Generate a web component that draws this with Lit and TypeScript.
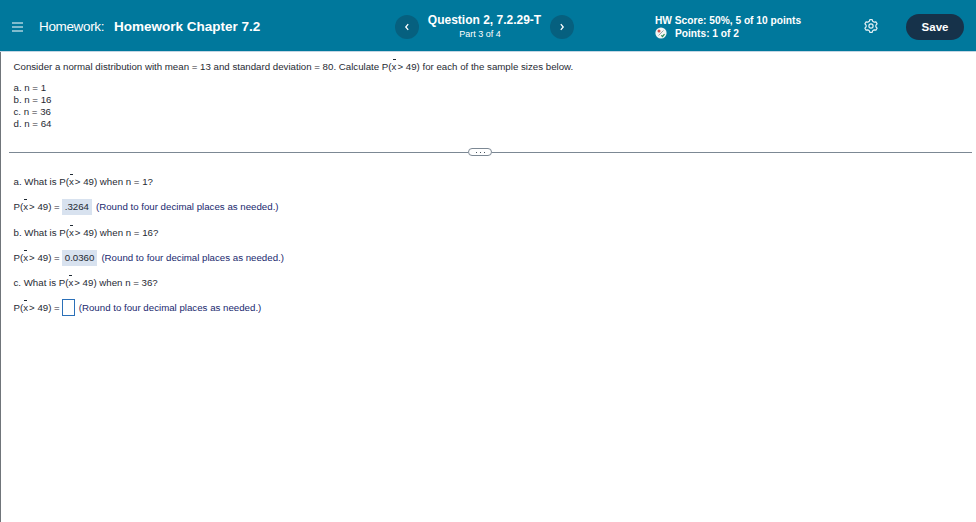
import { LitElement, html, css } from "lit";
import { customElement } from "lit/decorators.js";

const xbar = html`<span class="xb">x</span>`;
const px = html`<span>P(${xbar}<span class="gt">&gt;</span> 49) =</span>`;
const pq = html`P(${xbar}<span class="gt">&gt;</span> 49)`;

@customElement("app-root")
export class AppRoot extends LitElement {
  static styles = css`
    :host { display: block; width: 976px; height: 522px; background: #fff; font-family: "Liberation Sans", Arial, sans-serif; color: #1f2a33; overflow: hidden; }
    header { height: 52px; box-sizing: border-box; padding-top: 2px; background: #00789c; border-bottom: 1px solid #c4d6e4; color: #fff; display: flex; align-items: center; }
    .menu { margin-left: 12px; width: 12px; height: 10px; display: block; }
    .hw { margin-left: 15px; font-size: 13.5px; letter-spacing: -0.35px; width: 75px; white-space: nowrap; }
    .title { font-size: 13.5px; font-weight: 700; width: 281px; white-space: nowrap; }
    .nav { width: 24px; height: 24px; border-radius: 50%; background: #06607f; display: flex; align-items: center; justify-content: center; flex: none; }
    .q { width: 131px; text-align: center; line-height: 1; margin-top: -1px; }
    .q b { display: block; font-size: 12px; }
    .q span { display: block; font-size: 9px; margin-top: 4px; padding-right: 9px; }
    .score { margin-left: 81px; width: 208px; font-size: 10.2px; font-weight: 700; }
    .score div { height: 13px; line-height: 13px; white-space: nowrap; }
    .pts { display: flex; align-items: center; gap: 8px; }
    .gear { width: 16px; height: 16px; display: block; margin-right: 27px; margin-top: -1px; }
    .save { width: 58px; height: 26px; border-radius: 13px; background: #16324a; font-size: 11.5px; font-weight: 700; display: flex; align-items: center; justify-content: center; }
    main { font-size: 9.7px; line-height: 10px; padding: 10px 0 0 12.5px; height: 460px; border-left: 1px solid #70757a; }
    .xb { position: relative; }
    .xb::before { content: ""; position: absolute; left: 1px; top: -2px; width: 3px; height: 1px; background: #1f2a33; }
    .gt { margin-left: 1px; }
    .opts { margin-top: 10px; line-height: 12px; }
    .divider { display: flex; align-items: center; margin: 17px 4px 0 -4.5px; height: 10px; }
    .line { flex: 1; height: 1px; background: #7c8894; }
    .line.left { flex: none; width: 459px; }
    .pill { box-sizing: border-box; width: 24px; height: 8px; border: 1px solid #7c8894; border-radius: 4px; display: flex; align-items: center; justify-content: center; gap: 3px; }
    .pill i { width: 1px; height: 1px; background: #4a5560; }
    .q1 { margin-top: 20px; height: 10px; }
    .row { display: flex; align-items: center; height: 17px; white-space: nowrap; }
    .v { background: #d8e2ef; height: 16px; line-height: 16px; margin-left: 2px; padding: 0 3px; margin-right: 4px; }
    .hint { color: #20286e; }
    .first { margin-top: 11px; }
    .gap1 { margin-top: 8px; }
    .gap2 { margin-top: 9px; }
    .box { width: 11px; height: 15px; border: 1px solid #2b70b8; margin: 0 4px 0 2px; }
  `;

  render() {
    const hint = html`<span class="hint">(Round to four decimal places as needed.)</span>`;
    return html`
      <header>
        <svg class="menu" viewBox="0 0 12 10"><path d="M0 1h11M0 5h11M0 9h11" stroke="#fff" stroke-width="1"/></svg>
        <span class="hw">Homework:</span>
        <span class="title">Homework Chapter 7.2</span>
        <span class="nav"><svg width="8" height="8" viewBox="0 0 8 8"><path d="M5.2 1.2 2.8 4l2.4 2.8" fill="none" stroke="#fff" stroke-width="1.3"/></svg></span>
        <span class="q"><b>Question 2, 7.2.29-T</b><span>Part 3 of 4</span></span>
        <span class="nav"><svg width="8" height="8" viewBox="0 0 8 8"><path d="M2.8 1.2 5.2 4 2.8 6.8" fill="none" stroke="#fff" stroke-width="1.3"/></svg></span>
        <div class="score">
          <div>HW Score: 50%, 5 of 10 points</div>
          <div class="pts">
            <svg width="12" height="12" viewBox="0 0 12 12"><circle cx="6" cy="6" r="5.6" fill="#f2f5f4"/><path d="M3.5 8.5 8.5 3.5" stroke="#8a8f90" stroke-width=".8"/><circle cx="4" cy="4" r="1.5" fill="#d0504a"/><path d="M6.3 8.3l1.2 1.2 2-2.4" fill="none" stroke="#2e8b57" stroke-width="1.2"/></svg>
            <span>Points: 1 of 2</span>
          </div>
        </div>
        <svg class="gear" viewBox="0 0 16 16" fill="none" stroke="#e4f1f5" stroke-width="1.2" stroke-linejoin="round"><path d="M6.8 1.6h2.4l.5 1.7 1.5.9 1.7-.4 1.2 2.1-1.2 1.2v1.8l1.2 1.2-1.2 2.1-1.7-.4-1.5.9-.5 1.7H6.8l-.5-1.7-1.5-.9-1.7.4-1.2-2.1 1.2-1.2V7.1L1.9 5.9l1.2-2.1 1.7.4 1.5-.9z"/><circle cx="8" cy="8" r="2.1"/></svg>
        <span class="save">Save</span>
      </header>
      <main>
        <div>Consider a normal distribution with mean = 13 and standard deviation = 80. Calculate ${pq} for each of the sample sizes below.</div>
        <div class="opts"><div>a. n = 1</div><div>b. n = 16</div><div>c. n = 36</div><div>d. n = 64</div></div>
        <div class="divider"><span class="line left"></span><span class="pill"><i></i><i></i><i></i></span><span class="line"></span></div>
        <div class="q1">a. What is ${pq} when n = 1?</div>
        <div class="row first">${px}<span class="v">.3264</span>${hint}</div>
        <div class="row gap2"><span>b. What is ${pq} when n = 16?</span></div>
        <div class="row gap1">${px}<span class="v">0.0360</span>${hint}</div>
        <div class="row gap1"><span>c. What is ${pq} when n = 36?</span></div>
        <div class="row gap1">${px}<span class="box"></span>${hint}</div>
      </main>
    `;
  }
}
